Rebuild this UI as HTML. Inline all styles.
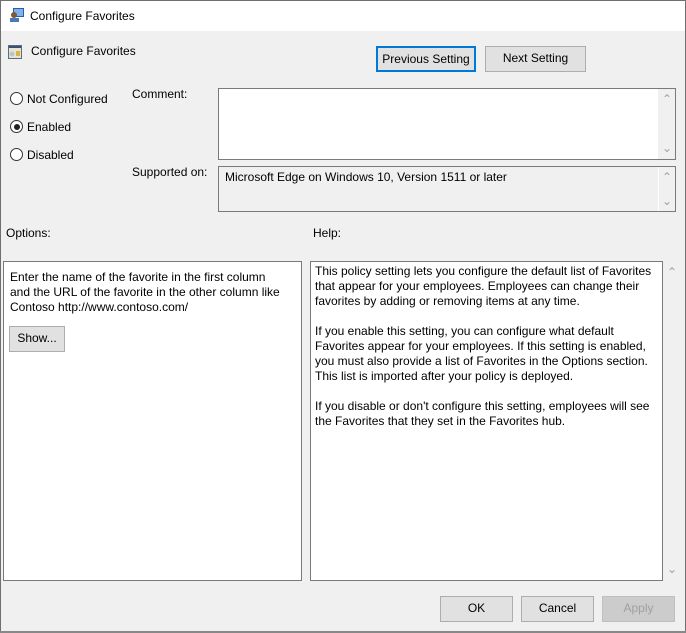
<!DOCTYPE html>
<html><head><meta charset="utf-8"><style>
*{margin:0;padding:0;box-sizing:border-box}
html,body{width:686px;height:633px;overflow:hidden;background:#f0f0f0}
body{font-family:"Liberation Sans",sans-serif;font-size:12px;color:#000;position:relative}
.a{position:absolute;white-space:nowrap}
.win{position:absolute;left:0;top:0;width:686px;height:633px;border:1px solid #6f6f6f;border-bottom:none}
.title{position:absolute;left:1px;top:1px;width:684px;height:30px;background:#fff}
.btn{position:absolute;background:#e1e1e1;border:1px solid #adadad;text-align:center;line-height:23px}
.box{position:absolute;border:1px solid #7a7a7a;background:#fff}
.radio{position:absolute;width:13px;height:13px;border:1px solid #333;border-radius:50%;background:#fff}
.t{font-size:12px;line-height:15px;letter-spacing:0}
.sc{position:absolute;color:#a0a0a0;font-size:12px}
</style></head><body>
<div class="win"></div>
<div class="title"></div>
<svg class="a" style="left:9px;top:7px" width="16" height="16"><rect x="4" y="1" width="11" height="9" fill="#2a5bb8"/><rect x="5" y="2" width="9" height="7" fill="#7fb2ea"/><circle cx="5" cy="8" r="3" fill="#7a5a3a"/><rect x="1" y="11" width="9" height="4" fill="#4a78b8"/></svg>
<div class="a" style="left:30px;top:9px">Configure Favorites</div>
<svg class="a" style="left:8px;top:45px" width="14" height="14"><rect x="0" y="0" width="14" height="14" fill="#5a6c7e"/><rect x="1" y="3" width="12" height="10" fill="#e8e4d4"/><rect x="1" y="1" width="12" height="2" fill="#3a5070"/><circle cx="4" cy="9" r="2.5" fill="#b9c4cc"/><rect x="8" y="6" width="4" height="5" fill="#d9b24c"/></svg>
<div class="a" style="left:31px;top:44px">Configure Favorites</div>
<div class="btn" style="left:376px;top:46px;width:100px;height:26px;border:2px solid #0078d7;line-height:22px">Previous Setting</div>
<div class="btn" style="left:485px;top:46px;width:101px;height:26px">Next Setting</div>
<div class="radio" style="left:10px;top:92px"></div><div class="a" style="left:27px;top:92px">Not Configured</div>
<div class="radio" style="left:10px;top:120px"></div><div class="a" style="left:14px;top:124px;width:6px;height:6px;border-radius:50%;background:#222"></div><div class="a" style="left:27px;top:120px">Enabled</div>
<div class="radio" style="left:10px;top:148px"></div><div class="a" style="left:27px;top:148px">Disabled</div>
<div class="a" style="left:132px;top:87px">Comment:</div>
<div class="box" style="left:218px;top:88px;width:458px;height:72px"></div>
<div class="a" style="left:658px;top:89px;width:17px;height:70px;background:#f0f0f0"></div>
<div class="sc a" style="left:662px;top:92px">&#8963;</div><div class="sc a" style="left:662px;top:141px">&#8964;</div>
<div class="a" style="left:132px;top:165px">Supported on:</div>
<div class="box" style="left:218px;top:166px;width:458px;height:46px;background:#f0f0f0"></div>
<div class="a" style="left:658px;top:167px;width:1px;height:44px;background:#fff"></div>
<div class="a" style="left:225px;top:170px">Microsoft Edge on Windows 10, Version 1511 or later</div>
<div class="sc a" style="left:662px;top:170px">&#8963;</div><div class="sc a" style="left:662px;top:194px">&#8964;</div>
<div class="a" style="left:6px;top:226px">Options:</div>
<div class="a" style="left:313px;top:226px">Help:</div>
<div class="box" style="left:3px;top:261px;width:299px;height:320px"></div>
<div class="a t" style="left:10px;top:270px">Enter the name of the favorite in the first column<br>and the URL of the favorite in the other column like<br>Contoso http://www.contoso.com/</div>
<div class="btn" style="left:9px;top:326px;width:56px;height:26px">Show...</div>
<div class="box" style="left:310px;top:261px;width:353px;height:320px"></div>
<div class="a t" style="left:315px;top:264px">This policy setting lets you configure the default list of Favorites<br>that appear for your employees. Employees can change their<br>favorites by adding or removing items at any time.<br><br>If you enable this setting, you can configure what default<br>Favorites appear for your employees. If this setting is enabled,<br>you must also provide a list of Favorites in the Options section.<br>This list is imported after your policy is deployed.<br><br>If you disable or don't configure this setting, employees will see<br>the Favorites that they set in the Favorites hub.</div>
<div class="sc a" style="left:667px;top:265px">&#8963;</div><div class="sc a" style="left:667px;top:562px">&#8964;</div>
<div class="btn" style="left:440px;top:596px;width:73px;height:26px">OK</div>
<div class="btn" style="left:521px;top:596px;width:73px;height:26px">Cancel</div>
<div class="btn" style="left:602px;top:596px;width:73px;height:26px;background:#ccc;border-color:#bfbfbf;color:#a0a0a0">Apply</div>
<div class="a" style="left:0;top:631px;width:686px;height:2px;background:#888"></div>
</body></html>
